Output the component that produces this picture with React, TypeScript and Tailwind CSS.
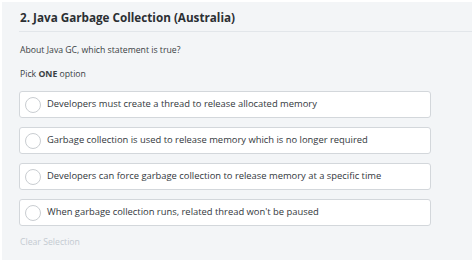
const options = [
  "Developers must create a thread to release allocated memory",
  "Garbage collection is used to release memory which is no longer required",
  "Developers can force garbage collection to release memory at a specific time",
  "When garbage collection runs, related thread won't be paused",
];

export default function App() {
  return (
    <div className="w-[474px] h-[263px] bg-white pt-[2px] pl-[2px] pr-[2px] font-['Open_Sans',sans-serif]">
      <div className="h-[258px] bg-[#f3f5f7] pl-[17px]">
        <div className="border-b border-[#e2e6ea] pl-[1px] pt-[7px] h-[30px]">
          <h2 className="text-[11.7px] leading-[16px] font-bold text-[#2b2f33]">
            2. Java Garbage Collection (Australia)
          </h2>
        </div>
        <div className="pr-[41px] pl-[1px]">
          <p className="mt-[12px] text-[8.7px] leading-[12px] text-[#3a3f44]">
            About Java GC, which statement is true?
          </p>
          <p className="mt-[12px] text-[8.7px] leading-[12px] text-[#3a3f44]">
            Pick <span className="font-bold">ONE</span> option
          </p>
          <div className="mt-[11px] -ml-[1px] flex flex-col gap-[9px]">
            {options.map((o) => (
              <div
                key={o}
                className="h-[27px] flex items-center gap-[6px] rounded-[3px] border border-[#d3d7db] bg-white pl-[5px]"
              >
                <span className="w-[16px] h-[16px] rounded-full border border-[#c9cdd1] bg-white shrink-0" />
                <span className="text-[9.4px] text-[#33383d]">{o}</span>
              </div>
            ))}
          </div>
          <p className="mt-[10px] text-[8.7px] leading-[12px] text-[#c3cad1]">
            Clear Selection
          </p>
        </div>
      </div>
    </div>
  );
}
